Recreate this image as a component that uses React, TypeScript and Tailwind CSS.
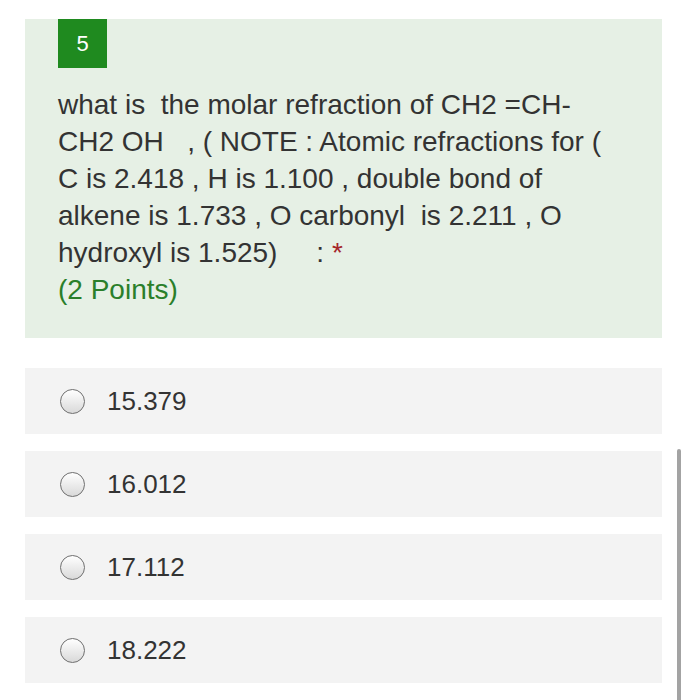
import React from 'react';

const options = ['15.379', '16.012', '17.112', '18.222'];

const Radio: React.FC = () => (
  <span className="block w-[25px] h-[25px] shrink-0 rounded-full border-[1.5px] border-[#6f6f6f] bg-gradient-to-b from-white to-[#d9d9d9]" />
);

const App: React.FC = () => {
  return (
    <div className="relative w-[687px] h-[700px] overflow-hidden bg-white font-['Liberation_Sans',Arial,sans-serif] text-[#333]">
      <div className="pt-[19px] pl-[25px] pr-[25px]">
        {/* Question card */}
        <div className="bg-[#e6f0e5] pl-[33px] pr-4 pb-[30px]">
          <div className="w-[49px] h-[49px] bg-[#1f8a1f] text-white text-[22px] flex items-center justify-center">
            5
          </div>
          <div className="mt-[18px] text-[28px] leading-[37px] whitespace-pre">
            <div>what is  the molar refraction of CH2 =CH-</div>
            <div>CH2 OH   , ( NOTE : Atomic refractions for (</div>
            <div>C is 2.418 , H is 1.100 , double bond of</div>
            <div>alkene is 1.733 , O carbonyl  is 2.211 , O</div>
            <div>
              hydroxyl is 1.525)     : <span className="text-[#a5262a]">*</span>
            </div>
            <div className="text-[#2a7f2a]">(2 Points)</div>
          </div>
        </div>

        {/* Options */}
        <div className="mt-[30px] flex flex-col gap-[17px]">
          {options.map(o => (
            <div key={o} className="h-[66px] bg-[#f3f3f3] flex items-center pl-[35px] gap-[22px]">
              <Radio />
              <span className="text-[26px]">{o}</span>
            </div>
          ))}
        </div>
      </div>

      {/* scrollbar */}
      <div className="absolute left-[677px] top-[449px] w-[4px] h-[260px] rounded-full bg-[#a3a3a3]" />
    </div>
  );
};

export default App;
